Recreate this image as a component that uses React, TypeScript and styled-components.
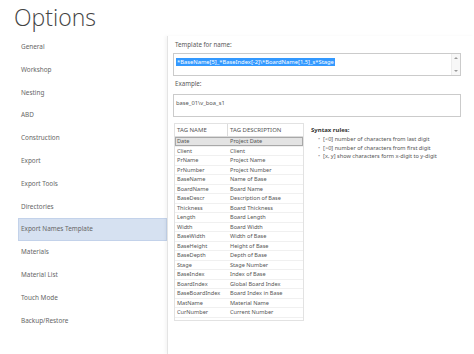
import styled, { createGlobalStyle } from 'styled-components';

const GlobalStyle = createGlobalStyle`
	html, body {
		margin: 0;
		padding: 0;
		background: #ffffff;
	}
	body {
		font-family: "Noto Sans", "Open Sans", sans-serif;
		color: #555;
	}
`

const Page = styled.div`
	width: 474px;
	height: 354px;
	overflow: hidden;
	display: flex;
	flex-direction: column;
`
const Title = styled.h1`
	margin: 0;
	height: 36px;
	padding-left: 14px;
	font-family: "Open Sans", sans-serif;
	font-weight: 300;
	font-size: 23px;
	line-height: 35px;
	color: #444;
`
const Body = styled.div`
	flex: 1;
	display: flex;
`
const Nav = styled.ul`
	list-style: none;
	margin: 0;
	padding: 0 0 0 18px;
	width: 149px;
`
const NavItem = styled.li<{ $active?: boolean }>`
	height: 22.8px;
	line-height: 22.8px;
	padding-left: 3px;
	font-size: 6.4px;
	color: #666;
	white-space: nowrap;
	background: ${p => p.$active ? '#d6e1f1' : 'transparent'};
	box-shadow: ${p => p.$active ? 'inset 0 0 0 1px #c3d2ea' : 'none'};
`
const Panel = styled.div`
	flex: 1;
	border-left: 1px solid #e4e4e4;
	box-shadow: -2px 0 3px rgba(0, 0, 0, 0.04);
	padding: 3px 13px 0 5px;
	display: flex;
	flex-direction: column;
`
const Label = styled.div`
	font-size: 6.2px;
	line-height: 12px;
	padding-left: 2px;
	color: #5a5a5a;
`
const TextBox = styled.div<{ $gap: number }>`
	height: 23px;
	margin-top: ${p => p.$gap}px;
	border: 1px solid #cbcbcb;
	display: flex;
	box-sizing: border-box;
`
const BoxText = styled.div`
	flex: 1;
	padding: 4px 0 0 2px;
	font-size: 5.8px;
	line-height: 9px;
	color: #555;
	white-space: nowrap;
`
const Selected = styled.span`
	background: #3399ff;
	color: #fff;
	padding: 0 1px;
`
const ScrollBar = styled.div`
	width: 8px;
	border-left: 1px solid #ececec;
	background: #f7f7f7;
	display: flex;
	flex-direction: column;
	justify-content: space-between;
	align-items: center;
	padding: 3px 0;
`
const Arrow = styled.div<{ $down?: boolean }>`
	width: 0;
	height: 0;
	border-left: 2px solid transparent;
	border-right: 2px solid transparent;
	${p => p.$down ? 'border-top: 2px solid #9a9a9a;' : 'border-bottom: 2px solid #9a9a9a;'}
`
const Gap = styled.div<{ $h: number }>`
	height: ${p => p.$h}px;
`
const Lower = styled.div`
	margin-top: 6px;
	display: flex;
	align-items: flex-start;
	padding-left: 1px;
`
const Table = styled.div`
	width: 130px;
	border: 1px solid #e2e2e2;
	padding-bottom: 2px;
	box-sizing: border-box;
`
const Row = styled.div<{ $head?: boolean; $active?: boolean }>`
	display: grid;
	grid-template-columns: 53px 1fr;
	height: ${p => p.$head ? '13px' : '9.5px'};
	line-height: ${p => p.$head ? '13px' : '9.5px'};
	font-size: ${p => p.$head ? '6px' : '5.6px'};
	color: ${p => p.$head ? '#555' : '#555'};
	border-bottom: 1px solid ${p => p.$head ? '#dcdcdc' : '#f0f0f0'};
	box-sizing: border-box;
	background: ${p => p.$active ? '#e3e3e3' : 'transparent'};
	box-shadow: ${p => p.$active ? 'inset 0 0 0 1px #a8a8a8' : 'none'};
`
const Cell = styled.div<{ $sep?: boolean }>`
	padding-left: 2px;
	white-space: nowrap;
	overflow: hidden;
	border-right: ${p => p.$sep ? '1px solid #dcdcdc' : 'none'};
`
const Rules = styled.div`
	margin: 3px 0 0 7px;
	color: #555;
`
const RulesTitle = styled.div`
	font-size: 6px;
	font-weight: 700;
	line-height: 9px;
	color: #333;
`
const RuleList = styled.ul`
	margin: 0;
	padding: 0 0 0 7px;
	list-style: none;
`
const Rule = styled.li`
	font-size: 5.6px;
	line-height: 8.5px;
	white-space: nowrap;
	&::before {
		content: '•';
		color: #999;
		margin-right: 3px;
	}
`

const navItems = [
	'General', 'Workshop', 'Nesting', 'ABD', 'Construction', 'Export', 'Export Tools',
	'Directories', 'Export Names Template', 'Materials', 'Material List', 'Touch Mode', 'Backup/Restore'
]

const tags: [string, string][] = [
	['Date', 'Project Date'],
	['Client', 'Client'],
	['PrName', 'Project Name'],
	['PrNumber', 'Project Number'],
	['BaseName', 'Name of Base'],
	['BoardName', 'Board Name'],
	['BaseDescr', 'Description of Base'],
	['Thickness', 'Board Thickness'],
	['Length', 'Board Length'],
	['Width', 'Board Width'],
	['BaseWidth', 'Width of Base'],
	['BaseHeight', 'Height of Base'],
	['BaseDepth', 'Depth of Base'],
	['Stage', 'Stage Number'],
	['BaseIndex', 'Index of Base'],
	['BoardIndex', 'Global Board Index'],
	['BaseBoardIndex', 'Board Index in Base'],
	['MatName', 'Material Name'],
	['CurNumber', 'Current Number'],
]

const rules = [
	'[<0] number of characters from last digit',
	'[>0] number of characters from first digit',
	'[x, y] show characters form x-digit to y-digit',
]

const App = () => {
	return (
		<Page>
			<GlobalStyle />
			<Title>Options</Title>
			<Body>
				<Nav>
					{navItems.map(item => (
						<NavItem key={item} $active={item === 'Export Names Template'}>{item}</NavItem>
					))}
				</Nav>
				<Panel>
					<Label>Template for name:</Label>
					<TextBox $gap={2}>
						<BoxText>
							<Selected>*BaseName[5]_*BaseIndex[-2]\*BoardName[1,5]_s*Stage</Selected>
						</BoxText>
						<ScrollBar>
							<Arrow />
							<Arrow $down />
						</ScrollBar>
					</TextBox>
					<Gap $h={2} />
					<Label>Example:</Label>
					<TextBox $gap={4}>
						<BoxText>base_01\v_boa_s1</BoxText>
					</TextBox>
					<Lower>
						<Table>
							<Row $head>
								<Cell $sep>TAG NAME</Cell>
								<Cell>TAG DESCRIPTION</Cell>
							</Row>
							{tags.map(([name, desc], i) => (
								<Row key={name} $active={i === 0}>
									<Cell>{name}</Cell>
									<Cell>{desc}</Cell>
								</Row>
							))}
						</Table>
						<Rules>
							<RulesTitle>Syntax rules:</RulesTitle>
							<RuleList>
								{rules.map(r => <Rule key={r}>{r}</Rule>)}
							</RuleList>
						</Rules>
					</Lower>
				</Panel>
			</Body>
		</Page>
	)
}

export default App;
